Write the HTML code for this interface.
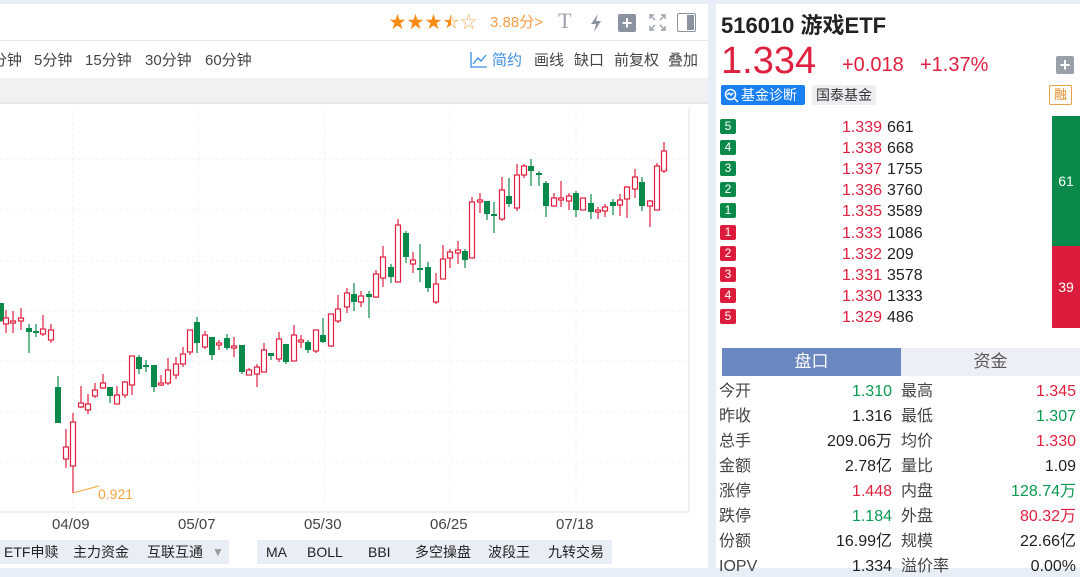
<!DOCTYPE html>
<html><head><meta charset="utf-8">
<style>
*{margin:0;padding:0;box-sizing:border-box}
body{width:1080px;height:568px;overflow:hidden;background:#e8eef7;font-family:"Liberation Sans","Noto Sans CJK SC",sans-serif;position:relative;color:#333}
.abs{position:absolute}
#left{left:0;top:4px;width:708px;height:564px;background:#fff}
#right{left:716px;top:4px;width:364px;height:564px;background:#fff}
.t{position:absolute;white-space:nowrap;line-height:20px}
.badge{position:absolute;width:16px;height:15px;border-radius:2px;color:#fff;font-size:12px;text-align:center;line-height:15px}
.g{background:#0a8a4a}.r{background:#db1c3c}
.red{color:#e0203f}.grn{color:#0a9a50}
</style></head><body>
<div id="left" class="abs">
  <div class="abs" style="left:0;top:36px;width:708px;height:1px;background:#e4e6ea"></div>
  <div class="abs" style="left:0;top:74px;width:708px;height:24px;background:#f0f1f2"></div>
  <div class="abs" style="left:0;top:98px;width:708px;height:2px;background:#e6e6e6"></div>
  <div class="t" style="left:389px;top:9px;font-size:17px;color:#fa8c16;letter-spacing:1px">★★★<span style="color:#fa8c16">⯪</span><span style="color:#fbb267">☆</span></div>
  <div class="t" style="left:490px;top:9px;font-size:15px;color:#f89c45">3.88分&gt;</div>
  <div class="t" style="left:558px;top:7px;font-size:22px;color:#9aa0aa;font-family:'Liberation Serif',serif">T</div>
  <svg class="abs" style="left:589px;top:10px" width="14" height="18" viewBox="0 0 14 18"><path d="M9 0 L2 10 L7 10 L5 18 L12 7 L7 7 Z" fill="#8c93a0"/></svg>
  <div class="abs" style="left:618px;top:10px;width:18px;height:18px;background:#8c93a0;border-radius:2px"></div>
  <div class="t" style="left:618px;top:9px;width:18px;text-align:center;color:#fff;font-size:18px;font-weight:bold">+</div>
  <svg class="abs" style="left:649px;top:10px" width="17" height="17" viewBox="0 0 17 17" fill="none" stroke="#9aa0aa" stroke-width="1.4"><path d="M1 5V1h4M1 1l5 5M12 1h4v4M16 1l-5 5M1 12v4h4M1 16l5-5M16 12v4h-4M16 16l-5-5"/></svg>
  <div class="abs" style="left:677px;top:9px;width:19px;height:19px;border:1.5px solid #8c93a0;border-radius:2px"></div>
  <div class="abs" style="left:687px;top:11px;width:7px;height:15px;background:#8c93a0"></div>
  <div class="t" style="left:-8px;top:47px;font-size:15px;color:#444">分钟</div>
  <div class="t" style="left:34px;top:47px;font-size:15px;color:#444">5分钟</div>
  <div class="t" style="left:85px;top:47px;font-size:15px;color:#444">15分钟</div>
  <div class="t" style="left:145px;top:47px;font-size:15px;color:#444">30分钟</div>
  <div class="t" style="left:205px;top:47px;font-size:15px;color:#444">60分钟</div>
  <svg class="abs" style="left:470px;top:48px" width="17" height="16" viewBox="0 0 17 16" fill="none" stroke="#3a8ee6" stroke-width="1.3"><path d="M1 0V15H17M3 12L8 6L11 9L16 3"/></svg>
  <div class="t" style="left:492px;top:47px;font-size:15px;color:#3a8ee6">简约</div>
  <div class="t" style="left:534px;top:47px;font-size:15px;color:#444">画线</div>
  <div class="t" style="left:574px;top:47px;font-size:15px;color:#444">缺口</div>
  <div class="t" style="left:614px;top:47px;font-size:15px;color:#444">前复权</div>
  <div class="t" style="left:668px;top:47px;font-size:15px;color:#444">叠加</div>
  <svg class="abs" id="chart" style="left:0;top:-4px" width="708" height="568"></svg>
  <div class="t" style="left:52px;top:511px;font-size:15px;color:#444">04/09</div>
  <div class="t" style="left:178px;top:511px;font-size:15px;color:#444">05/07</div>
  <div class="t" style="left:304px;top:511px;font-size:15px;color:#444">05/30</div>
  <div class="t" style="left:430px;top:511px;font-size:15px;color:#444">06/25</div>
  <div class="t" style="left:556px;top:511px;font-size:15px;color:#444">07/18</div>
  <div class="abs" style="left:0;top:536px;width:229px;height:24px;background:#e9eef6"></div>
  <div class="abs" style="left:257px;top:536px;width:195px;height:24px;background:#e9eef6"></div>
  <div class="abs" style="left:452px;top:536px;width:160px;height:24px;background:#e9eef6"></div>
  <div class="t" style="left:4px;top:538px;font-size:14px;color:#222">ETF申赎</div>
  <div class="t" style="left:73px;top:538px;font-size:14px;color:#222">主力资金</div>
  <div class="t" style="left:147px;top:538px;font-size:14px;color:#222">互联互通</div>
  <div class="t" style="left:212px;top:538px;font-size:12px;color:#999">▼</div>
  <div class="t" style="left:266px;top:538px;font-size:14px;color:#222">MA</div>
  <div class="t" style="left:307px;top:538px;font-size:14px;color:#222">BOLL</div>
  <div class="t" style="left:368px;top:538px;font-size:14px;color:#222">BBI</div>
  <div class="t" style="left:415px;top:538px;font-size:14px;color:#222">多空操盘</div>
  <div class="t" style="left:488px;top:538px;font-size:14px;color:#222">波段王</div>
  <div class="t" style="left:548px;top:538px;font-size:14px;color:#222">九转交易</div>
</div>

<div id="right" class="abs">
  <div class="t" style="left:5px;top:10px;font-size:22px;line-height:24px;font-weight:bold;color:#222">516010 游戏ETF</div>
  <div class="t red" style="left:5px;top:36px;font-size:38px;line-height:42px">1.334</div>
  <div class="t red" style="left:126px;top:51px;font-size:20px">+0.018</div>
  <div class="t red" style="left:204px;top:51px;font-size:20px">+1.37%</div>
  <div class="abs" style="left:340px;top:52px;width:18px;height:18px;background:#9aa0aa;border-radius:2px;color:#fff;text-align:center;font-size:18px;line-height:18px;font-weight:bold">+</div>
  <div class="abs" style="left:5px;top:81px;width:84px;height:20px;background:#1a7ff0;border-radius:2px"></div>
  <svg class="abs" style="left:8px;top:84px" width="15" height="15" viewBox="0 0 15 15" fill="none" stroke="#fff" stroke-width="1.5"><circle cx="6.5" cy="6.5" r="5"/><path d="M10 10l4 4M3 7l2-2 2 2 2-2"/></svg>
  <div class="t" style="left:25px;top:81px;font-size:14px;color:#fff">基金诊断</div>
  <div class="abs" style="left:96px;top:81px;width:64px;height:20px;background:#eceef1;border-radius:2px"></div>
  <div class="t" style="left:100px;top:81px;font-size:14px;color:#333">国泰基金</div>
  <div class="abs" style="left:333px;top:81px;width:23px;height:20px;border:1px solid #e8a14a;border-radius:2px;color:#e08a20;font-size:13px;text-align:center;line-height:18px">融</div>

  <div id="book"></div>
  <div class="abs" style="left:336px;top:112px;width:28px;height:130px;background:#0a8a4a;color:#fff;font-size:14px;text-align:center;line-height:130px">61</div>
  <div class="abs" style="left:336px;top:242px;width:28px;height:82px;background:#db1c3c;color:#fff;font-size:14px;text-align:center;line-height:82px">39</div>

  <div class="abs" style="left:6px;top:344px;width:179px;height:28px;background:#6b87c0;color:#fff;font-size:17px;text-align:center;line-height:28px">盘口</div>
  <div class="abs" style="left:185px;top:344px;width:179px;height:28px;background:#ecf0f6;color:#555;font-size:17px;text-align:center;line-height:28px">资金</div>
  <div id="stats"></div>
</div>

<script>
var C=document.getElementById('chart');
var h='';
[159,210,261,311,361,412,462].forEach(function(y){h+='<line x1="0" x2="689" y1="'+y+'" y2="'+y+'" stroke="#f0f0f0" stroke-dasharray="3,3"/>';});
[73,198,325,450,576].forEach(function(x){h+='<line x1="'+x+'" x2="'+x+'" y1="110" y2="512" stroke="#f0f0f0" stroke-dasharray="3,3"/>';});
h+='<line x1="689" x2="689" y1="108" y2="512" stroke="#e0e0e0"/><line x1="0" x2="689" y1="512" y2="512" stroke="#e0e0e0"/>';
var D=[
[1,'g',303,321,303,322],[6,'r',318,324,310,333],[13,'r',321,323,311,333],[21,'r',318,321,308,330],[29,'g',328,332,324,353],[36,'g',331,333,324,337],[43,'r',329,334,315,336],[51,'r',330,340,324,343],
[58,'g',387,423,376,423],[66,'r',447,459,429,468],[73,'r',422,466,413,493],[81,'r',403,407,386,408],[88,'r',404,410,394,414],[95,'r',390,396,383,398],[103,'r',383,388,374,389],[110,'g',387,396,387,403],[117,'r',395,404,386,404],[125,'r',382,395,381,398],[132,'r',356,385,356,395],[139,'g',357,369,355,374],[146,'g',365,367,360,372],[154,'g',365,387,365,392],[161,'r',383,385,375,386],[168,'r',370,383,358,385],[176,'r',364,375,357,379],[183,'r',354,364,347,367],[190,'r',330,352,330,355],[197,'g',322,343,317,353],[205,'r',335,347,331,349],[212,'g',337,355,337,360],[219,'r',343,345,340,350],[227,'g',338,348,334,350],[234,'r',346,348,337,357],[242,'g',345,372,345,374],[249,'r',370,375,368,375],[257,'r',367,374,364,387],[264,'r',350,372,343,372],[271,'g',353,356,353,360],[279,'r',339,359,332,362],[286,'g',344,362,344,364],[294,'r',335,361,325,361],[301,'r',340,342,335,348],[308,'g',342,350,340,353],[316,'r',330,351,330,353],[323,'g',335,342,318,343],[331,'r',314,346,314,347],[338,'r',309,321,295,323],
[347,'r',293,307,288,313],[354,'g',294,302,283,311],[361,'r',296,302,291,307],[369,'g',294,297,291,318],[376,'r',274,297,270,298],[383,'r',257,278,246,287],[391,'g',267,277,264,283],[398,'r',225,282,219,282],[406,'g',233,257,231,263],[413,'r',260,264,252,273],[420,'g',268,270,244,282],[428,'g',267,288,262,292],[436,'r',284,302,273,304],[443,'r',259,279,245,279],[450,'r',252,258,249,268],[458,'r',250,253,241,264],[465,'g',251,260,249,268],[472,'r',202,258,197,258],[480,'r',200,202,193,213],[487,'g',201,214,201,220],[494,'g',214,216,202,233],[502,'r',190,219,177,221],[509,'g',196,204,178,207],[517,'r',175,208,164,211],[524,'r',166,175,164,178],[531,'g',166,171,159,186],[539,'g',173,175,171,186],[546,'g',183,206,181,217],[554,'r',198,206,193,207],[561,'r',198,200,181,207],[569,'r',196,201,193,210],[576,'g',193,210,191,217],[583,'r',198,210,198,210],[591,'g',203,212,194,219],[598,'r',210,212,207,219],[605,'r',207,211,204,217],[613,'g',202,206,199,215],[620,'r',200,205,194,216],[627,'r',187,199,186,218],[635,'r',177,189,169,198],[642,'g',182,206,177,211],[650,'r',201,206,200,227],[657,'r',166,210,163,210],[664,'r',151,171,142,173]];
D.forEach(function(d){var x=d[0],col=d[1]=='r'?'#e0203f':'#0a8a4a';
h+='<line x1="'+x+'" x2="'+x+'" y1="'+d[4]+'" y2="'+d[5]+'" stroke="'+col+'" stroke-width="1.2"/>';
var hh=Math.max(d[3]-d[2],1.5);
if(d[1]=='r')h+='<rect x="'+(x-2.5)+'" y="'+d[2]+'" width="5" height="'+hh+'" fill="#fff" stroke="'+col+'" stroke-width="1.2"/>';
else h+='<rect x="'+(x-3)+'" y="'+d[2]+'" width="6" height="'+hh+'" fill="'+col+'"/>';});
h+='<polyline points="73,493 99,486" fill="none" stroke="#f7a23c"/><text x="98" y="499" font-size="14" fill="#f7a23c" font-family="Liberation Sans">0.921</text>';
C.innerHTML=h;
var B=[['5','g','1.339','661'],['4','g','1.338','668'],['3','g','1.337','1755'],['2','g','1.336','3760'],['1','g','1.335','3589'],['1','r','1.333','1086'],['2','r','1.332','209'],['3','r','1.331','3578'],['4','r','1.330','1333'],['5','r','1.329','486']];
var bh='';B.forEach(function(b,i){var y=115+i*21.1;
bh+='<div class="badge '+b[1]+'" style="left:4px;top:'+y+'px">'+b[0]+'</div><div class="t red" style="right:198px;top:'+(y-1)+'px;font-size:16px">'+b[2]+'</div><div class="t" style="left:171px;top:'+(y-1)+'px;font-size:16px;color:#222">'+b[3]+'</div>';});
document.getElementById('book').innerHTML=bh;
var S=[['今开','1.310','grn','最高','1.345','red'],['昨收','1.316','','最低','1.307','grn'],['总手','209.06万','','均价','1.330','red'],['金额','2.78亿','','量比','1.09',''],['涨停','1.448','red','内盘','128.74万','grn'],['跌停','1.184','grn','外盘','80.32万','red'],['份额','16.99亿','','规模','22.66亿',''],['IOPV','1.334','','溢价率','0.00%','']];
var sh='';S.forEach(function(r,i){var y=378+i*25;
sh+='<div class="t" style="left:3px;top:'+y+'px;font-size:16px;color:#444">'+r[0]+'</div><div class="t '+r[2]+'" style="right:188px;top:'+y+'px;font-size:16px;'+(r[2]?'':'color:#222')+'">'+r[1]+'</div><div class="t" style="left:185px;top:'+y+'px;font-size:16px;color:#444">'+r[3]+'</div><div class="t '+r[5]+'" style="right:4px;top:'+y+'px;font-size:16px;'+(r[5]?'':'color:#222')+'">'+r[4]+'</div>';});
document.getElementById('stats').innerHTML=sh;
</script>
</body></html>
